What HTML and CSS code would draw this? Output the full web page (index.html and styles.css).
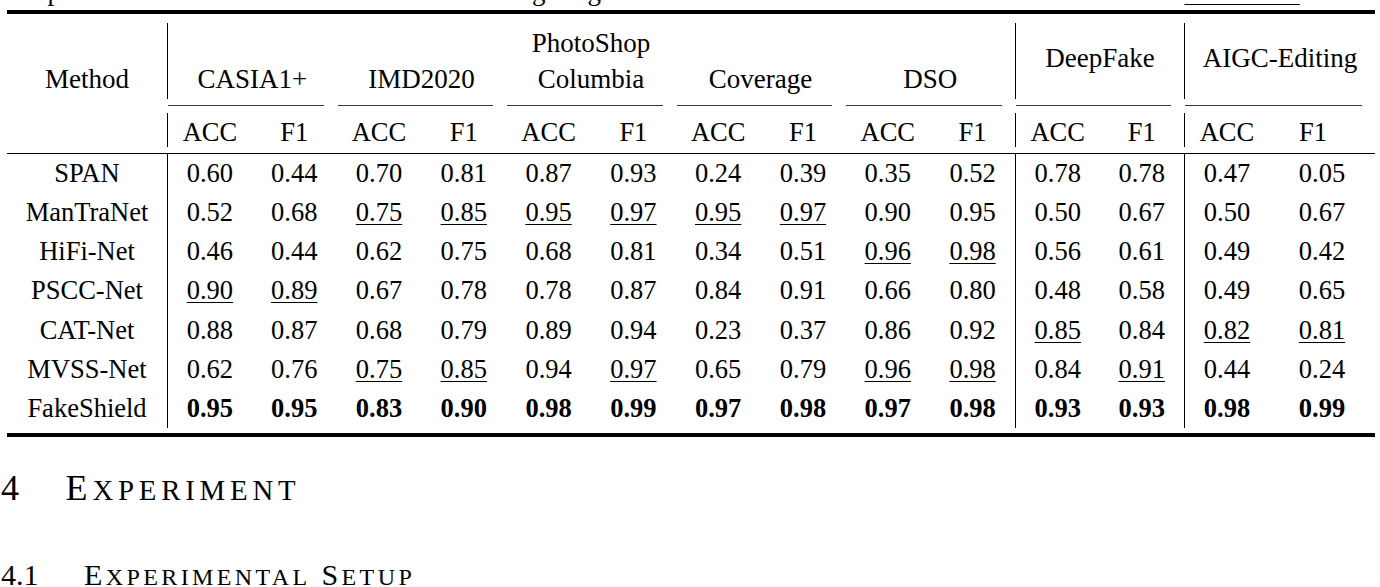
FILE: index.html
```html
<!DOCTYPE html>
<html lang="en">
<head>
<meta charset="utf-8">
<title>Detection results</title>
<link rel="stylesheet" href="styles.css">
</head>
<body>
<div class="page">
  <p class="caption">Comparison of detection results on three test sets giving the best results in <b>bold</b> and the second best results as <span class="cap-ul">underlined</span>.</p>

  <div class="tbl">
    <div class="full rule-heavy"></div>
    <div class="full sp9"></div>

    <div class="h1">Method</div>
    <div class="h1 g vl">CASIA1+</div>
    <div class="h1 g">IMD2020</div>
    <div class="h1 g"><span>PhotoShop</span><span>Columbia</span></div>
    <div class="h1 g">Coverage</div>
    <div class="h1 g">DSO</div>
    <div class="h1 g vl mid">DeepFake</div>
    <div class="h1 g vl mid">AIGC-Editing</div>

    <div class="full sp6"></div>
    <div class="cm-empty"></div>
    <div class="cm"></div>
    <div class="cm"></div>
    <div class="cm"></div>
    <div class="cm"></div>
    <div class="cm"></div>
    <div class="cm"></div>
    <div class="cm"></div>
    <div class="full sp7"></div>

    <div class="h2"></div>
    <div class="h2 vl">ACC</div><div class="h2">F1</div>
    <div class="h2">ACC</div><div class="h2">F1</div>
    <div class="h2">ACC</div><div class="h2">F1</div>
    <div class="h2">ACC</div><div class="h2">F1</div>
    <div class="h2">ACC</div><div class="h2">F1</div>
    <div class="h2 vl">ACC</div><div class="h2">F1</div>
    <div class="h2 vl">ACC</div><div class="h2 last-f1">F1</div>

    <div class="full sp6"></div>
    <div class="full rule-mid"></div>

    <div class="d">SPAN</div>
    <div class="d vl">0.60</div><div class="d">0.44</div>
    <div class="d">0.70</div><div class="d">0.81</div>
    <div class="d">0.87</div><div class="d">0.93</div>
    <div class="d">0.24</div><div class="d">0.39</div>
    <div class="d">0.35</div><div class="d">0.52</div>
    <div class="d vl">0.78</div><div class="d">0.78</div>
    <div class="d vl">0.47</div><div class="d">0.05</div>

    <div class="d">ManTraNet</div>
    <div class="d vl">0.52</div><div class="d">0.68</div>
    <div class="d"><span class="u">0.75</span></div><div class="d"><span class="u">0.85</span></div>
    <div class="d"><span class="u">0.95</span></div><div class="d"><span class="u">0.97</span></div>
    <div class="d"><span class="u">0.95</span></div><div class="d"><span class="u">0.97</span></div>
    <div class="d">0.90</div><div class="d">0.95</div>
    <div class="d vl">0.50</div><div class="d">0.67</div>
    <div class="d vl">0.50</div><div class="d">0.67</div>

    <div class="d">HiFi-Net</div>
    <div class="d vl">0.46</div><div class="d">0.44</div>
    <div class="d">0.62</div><div class="d">0.75</div>
    <div class="d">0.68</div><div class="d">0.81</div>
    <div class="d">0.34</div><div class="d">0.51</div>
    <div class="d"><span class="u">0.96</span></div><div class="d"><span class="u">0.98</span></div>
    <div class="d vl">0.56</div><div class="d">0.61</div>
    <div class="d vl">0.49</div><div class="d">0.42</div>

    <div class="d">PSCC-Net</div>
    <div class="d vl"><span class="u">0.90</span></div><div class="d"><span class="u">0.89</span></div>
    <div class="d">0.67</div><div class="d">0.78</div>
    <div class="d">0.78</div><div class="d">0.87</div>
    <div class="d">0.84</div><div class="d">0.91</div>
    <div class="d">0.66</div><div class="d">0.80</div>
    <div class="d vl">0.48</div><div class="d">0.58</div>
    <div class="d vl">0.49</div><div class="d">0.65</div>

    <div class="d">CAT-Net</div>
    <div class="d vl">0.88</div><div class="d">0.87</div>
    <div class="d">0.68</div><div class="d">0.79</div>
    <div class="d">0.89</div><div class="d">0.94</div>
    <div class="d">0.23</div><div class="d">0.37</div>
    <div class="d">0.86</div><div class="d">0.92</div>
    <div class="d vl"><span class="u">0.85</span></div><div class="d">0.84</div>
    <div class="d vl"><span class="u">0.82</span></div><div class="d"><span class="u">0.81</span></div>

    <div class="d">MVSS-Net</div>
    <div class="d vl">0.62</div><div class="d">0.76</div>
    <div class="d"><span class="u">0.75</span></div><div class="d"><span class="u">0.85</span></div>
    <div class="d">0.94</div><div class="d"><span class="u">0.97</span></div>
    <div class="d">0.65</div><div class="d">0.79</div>
    <div class="d"><span class="u">0.96</span></div><div class="d"><span class="u">0.98</span></div>
    <div class="d vl">0.84</div><div class="d"><span class="u">0.91</span></div>
    <div class="d vl">0.44</div><div class="d">0.24</div>

    <div class="d">FakeShield</div>
    <div class="d vl best">0.95</div><div class="d best">0.95</div>
    <div class="d best">0.83</div><div class="d best">0.90</div>
    <div class="d best">0.98</div><div class="d best">0.99</div>
    <div class="d best">0.97</div><div class="d best">0.98</div>
    <div class="d best">0.97</div><div class="d best">0.98</div>
    <div class="d vl best">0.93</div><div class="d best">0.93</div>
    <div class="d vl best">0.98</div><div class="d best">0.99</div>

    <div class="full sp5"></div>
    <div class="full rule-heavy"></div>
  </div>

  <h2 class="sec"><span class="num">4</span><span class="title">E<span class="sc">XPERIMENT</span></span></h2>
  <h3 class="subsec"><span class="num">4.1</span><span class="title">E<span class="sc">XPERIMENTAL</span> S<span class="sc">ETUP</span></span></h3>
</div>
</body>
</html>
```

FILE: styles.css
```css
html, body {
  margin: 0;
  padding: 0;
  background: #ffffff;
}

body {
  font-family: "Liberation Serif", "Times New Roman", serif;
  color: #000000;
  overflow: hidden;
}

.page {
  display: flow-root;
}

.caption {
  font-size: 27px;
  line-height: 30px;
  margin: -24.5px 0 0 -5px;
  white-space: nowrap;
}

.cap-ul {
  text-decoration: underline;
  text-decoration-thickness: 1px;
  text-underline-offset: 4px;
}

.tbl {
  display: grid;
  grid-template-columns: 160px repeat(10, 84.8px) 84.5px 84.5px 85px 106px;
  width: 1368px;
  margin: 4.5px 0 0 7px;
  font-size: 26.5px;
}

.tbl > div {
  box-sizing: border-box;
}

.full {
  grid-column: 1 / -1;
}

.rule-heavy {
  height: 4px;
  background: #000000;
}

.rule-mid {
  height: 1px;
  background: #000000;
}

.sp9 { height: 9px; }
.sp7 { height: 7px; }
.sp6 { height: 6px; }
.sp5 { height: 5px; }

.g {
  grid-column: span 2;
}

.vl {
  border-left: 1px solid #000000;
}

.h1 {
  height: 76px;
  font-size: 27px;
  line-height: 36px;
  display: flex;
  flex-direction: column;
  justify-content: flex-end;
  align-items: center;
  padding-bottom: 2px;
  white-space: nowrap;
}

.h1.mid {
  justify-content: flex-start;
  padding-top: 17px;
  padding-bottom: 0;
}

.cm-empty {
  height: 1px;
}

.cm {
  grid-column: span 2;
  height: 1px;
  background: #3a3a3a;
  margin: 0 13px 0 1px;
}

.h2 {
  height: 34px;
  line-height: 30px;
  padding-top: 4px;
  text-align: center;
}

.h2.last-f1 {
  padding-right: 18px;
}

.d {
  height: 39.14px;
  line-height: 39.14px;
  text-align: center;
  white-space: nowrap;
}

.u {
  text-decoration: underline;
  text-decoration-thickness: 1.3px;
  text-underline-offset: 3px;
}

.best {
  font-weight: bold;
}

.sec {
  display: flex;
  font-size: 36px;
  font-weight: normal;
  line-height: 44px;
  margin: 28.8px 0 0 0;
  padding-left: 1px;
  white-space: nowrap;
}

.sec .num {
  width: 64.6px;
}

.sec .title {
  letter-spacing: 4.8px;
}

.sc {
  font-size: 0.8em;
}

.subsec {
  display: flex;
  font-size: 30px;
  font-weight: normal;
  line-height: 36px;
  margin: 45.1px 0 0 0;
  padding-left: 1px;
  white-space: nowrap;
}

.subsec .num {
  width: 83px;
}

.subsec .title {
  letter-spacing: 3.4px;
}
```
